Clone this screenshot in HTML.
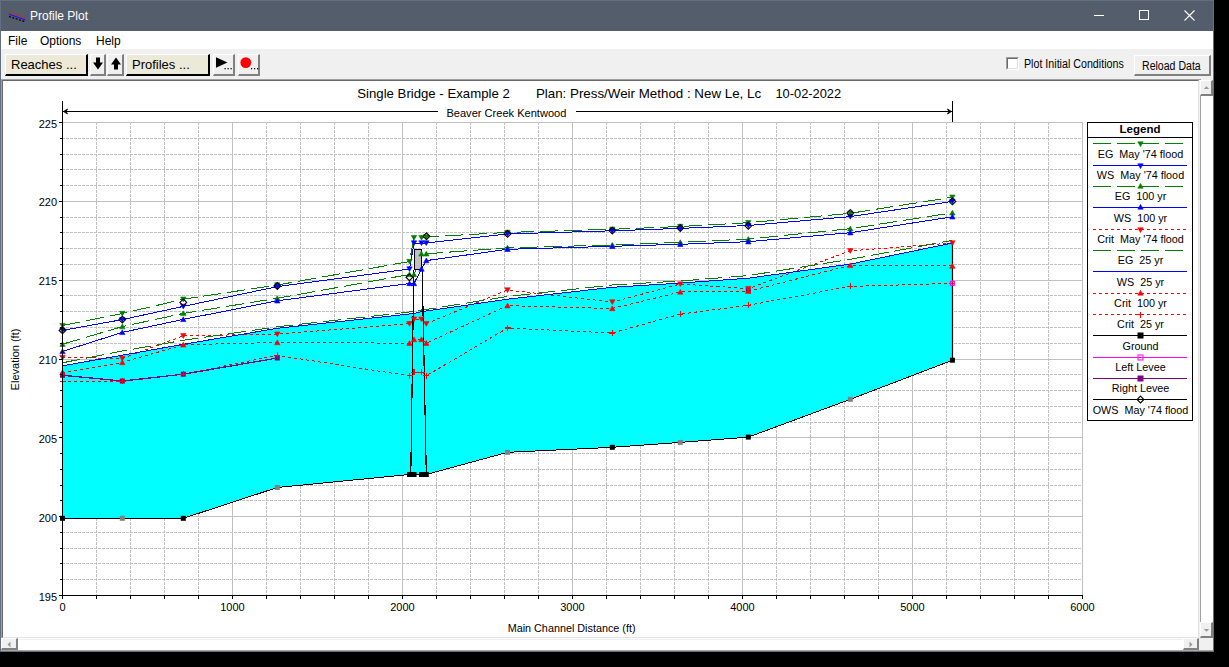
<!DOCTYPE html>
<html><head><meta charset="utf-8"><title>Profile Plot</title>
<style>
html,body{margin:0;padding:0;width:1229px;height:667px;overflow:hidden;background:#000;}
body{font-family:"Liberation Sans",sans-serif;position:relative;}
*{box-sizing:border-box;}
.a{position:absolute;}
.btn{position:absolute;background:#ece9d8;border-top:1px solid #fff;border-left:1px solid #fff;border-right:2px solid #000;border-bottom:2px solid #000;font-size:13px;color:#000;}
.gbtn{position:absolute;background:#f0f0f0;border-top:1px solid #fff;border-left:1px solid #fff;border-right:2px solid #808080;border-bottom:2px solid #808080;}
</style></head><body>
<div class="a" style="left:0;top:0;width:1214px;height:652px;background:#627080;"></div>
<div class="a" style="left:1px;top:1px;width:1212px;height:30px;background:#535d6b;"></div>
<div class="a" style="left:1px;top:31px;width:1212px;height:18px;background:#fff;"></div>
<div class="a" style="left:1px;top:49px;width:1212px;height:602px;background:#f0f0f0;"></div>
<!-- title -->
<svg class="a" style="left:8px;top:11px" width="18" height="12" viewBox="0 0 18 12">
<path d="M1 1.4L17 6.6" stroke="#ff1010" stroke-width="1.2" stroke-dasharray="2 2"/>
<path d="M1 3.3L17 8.7" stroke="#1818f0" stroke-width="1.1"/>
<path d="M1 5.5L17 10.7" stroke="#000" stroke-width="1.2" stroke-dasharray="2 1.5"/>
</svg>
<div class="a" style="left:30px;top:9px;font-size:12px;color:#fff;line-height:14px;">Profile Plot</div>
<div class="a" style="left:1094px;top:15px;width:10px;height:1px;background:#fff;"></div>
<div class="a" style="left:1139px;top:10px;width:10px;height:10px;border:1px solid #fff;"></div>
<svg class="a" style="left:1184px;top:10px" width="12" height="11" viewBox="0 0 12 11"><path d="M0.5 0.5 L10.5 10.5 M10.5 0.5 L0.5 10.5" stroke="#fff" stroke-width="1.1"/></svg>
<!-- menu -->
<div class="a" style="left:8px;top:34px;font-size:12px;line-height:14px;color:#000;">File</div>
<div class="a" style="left:40px;top:34px;font-size:12px;line-height:14px;color:#000;">Options</div>
<div class="a" style="left:96px;top:34px;font-size:12px;line-height:14px;color:#000;">Help</div>
<!-- toolbar -->
<div class="btn" style="left:5px;top:54px;width:83px;height:22px;"><span class="a" style="left:5px;top:2px;line-height:15px;">Reaches ...</span></div>
<div class="gbtn" style="left:90px;top:54px;width:16px;height:22px;"></div>
<svg class="a" style="left:93px;top:57px" width="10" height="14" viewBox="0 0 10 14"><path d="M3 0.5H7V5.5H10L5 12.5L0 5.5H3Z" fill="#000"/></svg>
<div class="gbtn" style="left:107px;top:54px;width:17px;height:22px;"></div>
<svg class="a" style="left:111px;top:57px" width="10" height="14" viewBox="0 0 10 14"><path d="M3 12.5H7V7.5H10L5 0.5L0 7.5H3Z" fill="#000"/></svg>
<div class="btn" style="left:126px;top:54px;width:84px;height:22px;"><span class="a" style="left:5px;top:2px;line-height:15px;">Profiles ...</span></div>
<div class="gbtn" style="left:213px;top:54px;width:22px;height:22px;"></div>
<svg class="a" style="left:215px;top:57px" width="20" height="14" viewBox="0 0 20 14"><path d="M1 0.2L12.5 5.5L1 10.8Z" fill="#000"/><rect x="9.5" y="11" width="1.2" height="1.3" fill="#000"/><rect x="12.5" y="11" width="1.2" height="1.3" fill="#000"/><rect x="15.5" y="11" width="1.2" height="1.3" fill="#000"/></svg>
<div class="gbtn" style="left:238px;top:54px;width:22px;height:22px;"></div>
<svg class="a" style="left:240px;top:57px" width="20" height="14" viewBox="0 0 20 14"><circle cx="5.8" cy="5.6" r="5.4" fill="#ff0000"/><rect x="11" y="11" width="1.2" height="1.3" fill="#000"/><rect x="14" y="11" width="1.2" height="1.3" fill="#000"/><rect x="17" y="11" width="1.2" height="1.3" fill="#000"/></svg>
<div class="a" style="left:1006px;top:57px;width:13px;height:13px;border-top:1px solid #a0a0a0;border-left:1px solid #a0a0a0;border-right:1px solid #fff;border-bottom:1px solid #fff;"></div>
<div class="a" style="left:1007px;top:58px;width:11px;height:11px;border-top:1px solid #696969;border-left:1px solid #696969;border-right:1px solid #e3e3e3;border-bottom:1px solid #e3e3e3;background:#fff;"></div>
<div class="a" style="left:1023.5px;top:57px;font-size:12px;line-height:14px;color:#000;white-space:nowrap;transform:scaleX(0.89);transform-origin:0 0;">Plot Initial Conditions</div>
<div class="gbtn" style="left:1134px;top:55px;width:77px;height:21px;"><span class="a" style="left:7px;top:3px;font-size:12px;line-height:14px;color:#000;white-space:nowrap;transform:scaleX(0.88);transform-origin:0 0;">Reload Data</span></div>
<!-- plot panel -->
<div class="a" style="left:1px;top:79px;width:1200px;height:560px;background:#f0f0f0;border-top:1px solid #a0a0a0;border-left:1px solid #a0a0a0;"></div>
<div class="a" style="left:2px;top:80px;width:1197px;height:558px;background:#fff;border-top:1px solid #696969;border-left:1px solid #696969;border-right:1px solid #e3e3e3;border-bottom:1px solid #e3e3e3;"></div>
<!-- v scrollbar -->
<div class="a" style="left:1200px;top:80px;width:13px;height:558px;background:#fff;border-left:1px solid #a0a0a0;"></div>
<div class="gbtn" style="left:1200px;top:80px;width:13px;height:16px;"></div>
<svg class="a" style="left:1202px;top:85px" width="9" height="6" viewBox="0 0 9 6"><path d="M4.5 1.2L7.2 4H1.8Z" fill="#999"/></svg>
<div class="gbtn" style="left:1200px;top:622px;width:13px;height:16px;"></div>
<svg class="a" style="left:1202px;top:627px" width="9" height="6" viewBox="0 0 9 6"><path d="M4.5 4.8L7.2 2H1.8Z" fill="#999"/></svg>
<!-- h scrollbar -->
<div class="a" style="left:1px;top:638px;width:1198px;height:12px;background:#fff;"></div>
<div class="a" style="left:1px;top:639px;width:1198px;height:1px;background:#f0f0f0;"></div>
<div class="a" style="left:1px;top:650px;width:1212px;height:1px;background:#a8a8a8;"></div>
<div class="gbtn" style="left:1px;top:638px;width:17px;height:12px;"></div>
<svg class="a" style="left:6px;top:640px" width="6" height="9" viewBox="0 0 6 9"><path d="M1.5 4.5L4.5 1.5V7.5Z" fill="#999"/></svg>
<div class="gbtn" style="left:1183px;top:638px;width:16px;height:12px;"></div>
<svg class="a" style="left:1188px;top:640px" width="6" height="9" viewBox="0 0 6 9"><path d="M4.5 4.5L1.5 1.5V7.5Z" fill="#999"/></svg>
<div class="a" style="left:1200px;top:638px;width:13px;height:12px;background:#f0f0f0;"></div>
<svg width="1229" height="667" viewBox="0 0 1229 667" style="position:absolute;left:0;top:0" font-family="Liberation Sans, sans-serif">
<defs><clipPath id="pc"><rect x="3" y="81" width="1195" height="556"/></clipPath></defs>
<g clip-path="url(#pc)">
<line x1="62" y1="579.5" x2="1082" y2="579.5" stroke="#c0c0c0" stroke-width="1" stroke-dasharray="3 1"/>
<line x1="62" y1="563.5" x2="1082" y2="563.5" stroke="#c0c0c0" stroke-width="1" stroke-dasharray="3 1"/>
<line x1="62" y1="548.5" x2="1082" y2="548.5" stroke="#c0c0c0" stroke-width="1" stroke-dasharray="3 1"/>
<line x1="62" y1="532.5" x2="1082" y2="532.5" stroke="#c0c0c0" stroke-width="1" stroke-dasharray="3 1"/>
<line x1="62.5" y1="516.5" x2="1082.5" y2="516.5" stroke="#c0c0c0" stroke-width="1"/>
<line x1="62" y1="500.5" x2="1082" y2="500.5" stroke="#c0c0c0" stroke-width="1" stroke-dasharray="3 1"/>
<line x1="62" y1="485.5" x2="1082" y2="485.5" stroke="#c0c0c0" stroke-width="1" stroke-dasharray="3 1"/>
<line x1="62" y1="469.5" x2="1082" y2="469.5" stroke="#c0c0c0" stroke-width="1" stroke-dasharray="3 1"/>
<line x1="62" y1="453.5" x2="1082" y2="453.5" stroke="#c0c0c0" stroke-width="1" stroke-dasharray="3 1"/>
<line x1="62.5" y1="437.5" x2="1082.5" y2="437.5" stroke="#c0c0c0" stroke-width="1"/>
<line x1="62" y1="422.5" x2="1082" y2="422.5" stroke="#c0c0c0" stroke-width="1" stroke-dasharray="3 1"/>
<line x1="62" y1="406.5" x2="1082" y2="406.5" stroke="#c0c0c0" stroke-width="1" stroke-dasharray="3 1"/>
<line x1="62" y1="390.5" x2="1082" y2="390.5" stroke="#c0c0c0" stroke-width="1" stroke-dasharray="3 1"/>
<line x1="62" y1="374.5" x2="1082" y2="374.5" stroke="#c0c0c0" stroke-width="1" stroke-dasharray="3 1"/>
<line x1="62.5" y1="359.5" x2="1082.5" y2="359.5" stroke="#c0c0c0" stroke-width="1"/>
<line x1="62" y1="343.5" x2="1082" y2="343.5" stroke="#c0c0c0" stroke-width="1" stroke-dasharray="3 1"/>
<line x1="62" y1="327.5" x2="1082" y2="327.5" stroke="#c0c0c0" stroke-width="1" stroke-dasharray="3 1"/>
<line x1="62" y1="311.5" x2="1082" y2="311.5" stroke="#c0c0c0" stroke-width="1" stroke-dasharray="3 1"/>
<line x1="62" y1="295.5" x2="1082" y2="295.5" stroke="#c0c0c0" stroke-width="1" stroke-dasharray="3 1"/>
<line x1="62.5" y1="280.5" x2="1082.5" y2="280.5" stroke="#c0c0c0" stroke-width="1"/>
<line x1="62" y1="264.5" x2="1082" y2="264.5" stroke="#c0c0c0" stroke-width="1" stroke-dasharray="3 1"/>
<line x1="62" y1="248.5" x2="1082" y2="248.5" stroke="#c0c0c0" stroke-width="1" stroke-dasharray="3 1"/>
<line x1="62" y1="232.5" x2="1082" y2="232.5" stroke="#c0c0c0" stroke-width="1" stroke-dasharray="3 1"/>
<line x1="62" y1="217.5" x2="1082" y2="217.5" stroke="#c0c0c0" stroke-width="1" stroke-dasharray="3 1"/>
<line x1="62.5" y1="201.5" x2="1082.5" y2="201.5" stroke="#c0c0c0" stroke-width="1"/>
<line x1="62" y1="185.5" x2="1082" y2="185.5" stroke="#c0c0c0" stroke-width="1" stroke-dasharray="3 1"/>
<line x1="62" y1="169.5" x2="1082" y2="169.5" stroke="#c0c0c0" stroke-width="1" stroke-dasharray="3 1"/>
<line x1="62" y1="154.5" x2="1082" y2="154.5" stroke="#c0c0c0" stroke-width="1" stroke-dasharray="3 1"/>
<line x1="62" y1="138.5" x2="1082" y2="138.5" stroke="#c0c0c0" stroke-width="1" stroke-dasharray="3 1"/>
<line x1="62.5" y1="122.5" x2="1082.5" y2="122.5" stroke="#c0c0c0" stroke-width="1"/>
<line x1="96.5" y1="122" x2="96.5" y2="595" stroke="#c0c0c0" stroke-width="1" stroke-dasharray="3 1"/>
<line x1="130.5" y1="122" x2="130.5" y2="595" stroke="#c0c0c0" stroke-width="1" stroke-dasharray="3 1"/>
<line x1="164.5" y1="122" x2="164.5" y2="595" stroke="#c0c0c0" stroke-width="1" stroke-dasharray="3 1"/>
<line x1="198.5" y1="122" x2="198.5" y2="595" stroke="#c0c0c0" stroke-width="1" stroke-dasharray="3 1"/>
<line x1="232.5" y1="122.5" x2="232.5" y2="595.5" stroke="#c0c0c0" stroke-width="1"/>
<line x1="266.5" y1="122" x2="266.5" y2="595" stroke="#c0c0c0" stroke-width="1" stroke-dasharray="3 1"/>
<line x1="300.5" y1="122" x2="300.5" y2="595" stroke="#c0c0c0" stroke-width="1" stroke-dasharray="3 1"/>
<line x1="334.5" y1="122" x2="334.5" y2="595" stroke="#c0c0c0" stroke-width="1" stroke-dasharray="3 1"/>
<line x1="368.5" y1="122" x2="368.5" y2="595" stroke="#c0c0c0" stroke-width="1" stroke-dasharray="3 1"/>
<line x1="402.5" y1="122.5" x2="402.5" y2="595.5" stroke="#c0c0c0" stroke-width="1"/>
<line x1="436.5" y1="122" x2="436.5" y2="595" stroke="#c0c0c0" stroke-width="1" stroke-dasharray="3 1"/>
<line x1="470.5" y1="122" x2="470.5" y2="595" stroke="#c0c0c0" stroke-width="1" stroke-dasharray="3 1"/>
<line x1="504.5" y1="122" x2="504.5" y2="595" stroke="#c0c0c0" stroke-width="1" stroke-dasharray="3 1"/>
<line x1="538.5" y1="122" x2="538.5" y2="595" stroke="#c0c0c0" stroke-width="1" stroke-dasharray="3 1"/>
<line x1="572.5" y1="122.5" x2="572.5" y2="595.5" stroke="#c0c0c0" stroke-width="1"/>
<line x1="606.5" y1="122" x2="606.5" y2="595" stroke="#c0c0c0" stroke-width="1" stroke-dasharray="3 1"/>
<line x1="640.5" y1="122" x2="640.5" y2="595" stroke="#c0c0c0" stroke-width="1" stroke-dasharray="3 1"/>
<line x1="674.5" y1="122" x2="674.5" y2="595" stroke="#c0c0c0" stroke-width="1" stroke-dasharray="3 1"/>
<line x1="708.5" y1="122" x2="708.5" y2="595" stroke="#c0c0c0" stroke-width="1" stroke-dasharray="3 1"/>
<line x1="742.5" y1="122.5" x2="742.5" y2="595.5" stroke="#c0c0c0" stroke-width="1"/>
<line x1="776.5" y1="122" x2="776.5" y2="595" stroke="#c0c0c0" stroke-width="1" stroke-dasharray="3 1"/>
<line x1="810.5" y1="122" x2="810.5" y2="595" stroke="#c0c0c0" stroke-width="1" stroke-dasharray="3 1"/>
<line x1="844.5" y1="122" x2="844.5" y2="595" stroke="#c0c0c0" stroke-width="1" stroke-dasharray="3 1"/>
<line x1="878.5" y1="122" x2="878.5" y2="595" stroke="#c0c0c0" stroke-width="1" stroke-dasharray="3 1"/>
<line x1="912.5" y1="122.5" x2="912.5" y2="595.5" stroke="#c0c0c0" stroke-width="1"/>
<line x1="946.5" y1="122" x2="946.5" y2="595" stroke="#c0c0c0" stroke-width="1" stroke-dasharray="3 1"/>
<line x1="980.5" y1="122" x2="980.5" y2="595" stroke="#c0c0c0" stroke-width="1" stroke-dasharray="3 1"/>
<line x1="1014.5" y1="122" x2="1014.5" y2="595" stroke="#c0c0c0" stroke-width="1" stroke-dasharray="3 1"/>
<line x1="1048.5" y1="122" x2="1048.5" y2="595" stroke="#c0c0c0" stroke-width="1" stroke-dasharray="3 1"/>
<line x1="1082.5" y1="122.5" x2="1082.5" y2="595.5" stroke="#c0c0c0" stroke-width="1"/>
<polygon points="62.5,365.8 122.3,355.2 183.3,344.3 277.3,328.3 409.5,314.0 414.0,313.5 421.5,311.5 426.3,311.0 507.5,299.2 612.3,287.3 680.3,283.1 748.3,278.2 850.3,264.1 952.4,243.0 952.4,360.2 850.3,399.3 748.3,437.1 680.3,442.4 612.3,447.3 507.5,452.3 426.3,474.5 421.5,474.5 414.0,474.5 409.5,474.5 277.3,487.5 183.3,518.3 122.3,518.3 62.5,518.3" fill="#00ffff" stroke="none"/>
<polyline points="62.5,518.3 122.3,518.3 183.3,518.3 277.3,487.5 409.5,474.5 414.0,474.5 421.5,474.5 426.3,474.5 507.5,452.3 612.3,447.3 680.3,442.4 748.3,437.1 850.3,399.3 952.4,360.2" fill="none" stroke="#000" stroke-width="1.0" shape-rendering="crispEdges"/>
<polyline points="62.5,381.6 122.3,381.4 183.3,374.2 277.3,355.4 409.5,375.8 414.0,372.2 421.5,372.2 426.3,375.8 507.5,328.0 612.3,333.0 680.3,314.1 748.3,305.3 850.3,286.4 952.4,283.4" fill="none" stroke="#ff0000" stroke-width="1.0" stroke-dasharray="3 3" shape-rendering="crispEdges"/>
<polyline points="62.5,372.4 122.3,362.5 183.3,344.8 277.3,342.5 409.5,343.2 414.0,339.5 421.5,339.5 426.3,343.2 507.5,305.7 612.3,308.5 680.3,292.0 748.3,291.2 850.3,265.4 952.4,266.0" fill="none" stroke="#ff0000" stroke-width="1.0" stroke-dasharray="3 3" shape-rendering="crispEdges"/>
<polyline points="62.5,357.4 122.3,358.5 183.3,335.8 277.3,334.1 409.5,323.7 414.0,319.2 421.5,319.2 426.3,323.7 507.5,290.0 612.3,302.0 680.3,284.0 748.3,288.6 850.3,250.8 952.4,243.0" fill="none" stroke="#ff0000" stroke-width="1.0" stroke-dasharray="3 3" shape-rendering="crispEdges"/>
<polyline points="62.5,362.8 122.3,351.0 183.3,340.3 277.3,326.8 409.5,312.0 414.0,311.5 421.5,310.0 426.3,309.5 507.5,296.5 612.3,285.0 680.3,281.0 748.3,275.6 850.3,259.3 952.4,240.3" fill="none" stroke="#008000" stroke-width="1.0" stroke-dasharray="18 6" shape-rendering="crispEdges"/>
<polyline points="62.5,365.8 122.3,355.2 183.3,344.3 277.3,328.3 409.5,314.0 414.0,313.5 421.5,311.5 426.3,311.0 507.5,299.2 612.3,287.3 680.3,283.1 748.3,278.2 850.3,264.1 952.4,243.0" fill="none" stroke="#0000ff" stroke-width="1.0" shape-rendering="crispEdges"/>
<polyline points="62.5,344.2 122.3,326.6 183.3,313.4 277.3,298.3 409.5,274.5 414.0,274.5 421.5,253.8 426.3,253.8 507.5,247.8 612.3,245.0 680.3,242.3 748.3,239.1 850.3,228.7 952.4,212.8" fill="none" stroke="#008000" stroke-width="1.0" stroke-dasharray="18 6" shape-rendering="crispEdges"/>
<polyline points="62.5,351.4 122.3,332.4 183.3,319.4 277.3,300.8 409.5,283.5 414.0,283.5 421.5,269.0 426.3,260.6 507.5,249.3 612.3,246.3 680.3,244.3 748.3,241.7 850.3,232.7 952.4,216.8" fill="none" stroke="#0000ff" stroke-width="1.0" shape-rendering="crispEdges"/>
<polyline points="62.5,325.6 122.3,313.5 183.3,299.2 277.3,285.0 409.5,261.5 414.0,237.6 421.5,237.6 426.3,237.0 507.5,232.4 612.3,229.3 680.3,226.5 748.3,222.7 850.3,213.3 952.4,197.2" fill="none" stroke="#008000" stroke-width="1.0" stroke-dasharray="18 6" shape-rendering="crispEdges"/>
<polyline points="62.5,330.4 122.3,319.6 183.3,306.4 277.3,286.6 409.5,269.0 414.0,243.0 421.5,243.0 426.3,243.0 507.5,233.9 612.3,230.8 680.3,228.4 748.3,225.5 850.3,216.6 952.4,201.4" fill="none" stroke="#0000ff" stroke-width="1.0" shape-rendering="crispEdges"/>
<polyline points="62.5,375.3 122.3,381.0 183.3,374.2 277.3,358.0" fill="none" stroke="#800080" stroke-width="1.3" shape-rendering="crispEdges"/>
<line x1="952.5" y1="243" x2="952.5" y2="360" stroke="#000" stroke-width="1.2"/>
<line x1="413.8" y1="270" x2="410.8" y2="474" stroke="#000" stroke-width="1.2" shape-rendering="crispEdges"/>
<line x1="422.2" y1="270" x2="426.3" y2="474" stroke="#000" stroke-width="1.2" shape-rendering="crispEdges"/>
<rect x="414.5" y="249.5" width="7" height="20" fill="#c0c0c0" stroke="#000" stroke-width="1"/>
<rect x="60.0" y="515.8" width="5.0" height="5.0" fill="#000"/>
<rect x="119.8" y="515.8" width="5.0" height="5.0" fill="#808080"/>
<rect x="180.8" y="515.8" width="5.0" height="5.0" fill="#000"/>
<rect x="274.8" y="485.0" width="5.0" height="5.0" fill="#808080"/>
<rect x="407.0" y="472.0" width="5.0" height="5.0" fill="#000"/>
<rect x="411.5" y="472.0" width="5.0" height="5.0" fill="#000"/>
<rect x="419.0" y="472.0" width="5.0" height="5.0" fill="#000"/>
<rect x="423.8" y="472.0" width="5.0" height="5.0" fill="#000"/>
<rect x="505.0" y="449.8" width="5.0" height="5.0" fill="#808080"/>
<rect x="609.8" y="444.8" width="5.0" height="5.0" fill="#000"/>
<rect x="677.8" y="439.9" width="5.0" height="5.0" fill="#808080"/>
<rect x="745.8" y="434.6" width="5.0" height="5.0" fill="#000"/>
<rect x="847.8" y="396.8" width="5.0" height="5.0" fill="#808080"/>
<rect x="949.9" y="357.7" width="5.0" height="5.0" fill="#000"/>
<rect x="60.0" y="372.8" width="5.0" height="5.0" fill="#800080"/>
<rect x="119.8" y="378.5" width="5.0" height="5.0" fill="#800080"/>
<rect x="180.8" y="371.7" width="5.0" height="5.0" fill="#800080"/>
<rect x="274.8" y="355.5" width="5.0" height="5.0" fill="#800080"/>
<rect x="745.8" y="287.8" width="5.0" height="5.0" fill="#800080"/>
<path d="M59.5 381.6H65.5M62.5 378.6V384.6" stroke="#ff0000" stroke-width="1.2" shape-rendering="crispEdges"/>
<polygon points="59.8,374.6 65.2,374.6 62.5,369.8" fill="#ff0000" stroke="#ff0000" stroke-width="0.6"/>
<polygon points="59.8,355.2 65.2,355.2 62.5,360.0" fill="#ff0000" stroke="#ff0000" stroke-width="0.6"/>
<polygon points="59.8,346.4 65.2,346.4 62.5,341.6" fill="#008000" stroke="#008000" stroke-width="0.6"/>
<polygon points="59.8,353.6 65.2,353.6 62.5,348.8" fill="#0000ff" stroke="#0000ff" stroke-width="0.6"/>
<polygon points="59.8,323.4 65.2,323.4 62.5,328.2" fill="#008000" stroke="#008000" stroke-width="0.6"/>
<polygon points="59.8,328.2 65.2,328.2 62.5,333.0" fill="#0000ff" stroke="#0000ff" stroke-width="0.6"/>
<path d="M119.3 381.4H125.3M122.3 378.4V384.4" stroke="#ff0000" stroke-width="1.2" shape-rendering="crispEdges"/>
<polygon points="119.6,364.7 125.0,364.7 122.3,359.9" fill="#ff0000" stroke="#ff0000" stroke-width="0.6"/>
<polygon points="119.6,356.3 125.0,356.3 122.3,361.1" fill="#ff0000" stroke="#ff0000" stroke-width="0.6"/>
<polygon points="119.6,328.8 125.0,328.8 122.3,324.0" fill="#008000" stroke="#008000" stroke-width="0.6"/>
<polygon points="119.6,334.6 125.0,334.6 122.3,329.8" fill="#0000ff" stroke="#0000ff" stroke-width="0.6"/>
<polygon points="119.6,311.3 125.0,311.3 122.3,316.1" fill="#008000" stroke="#008000" stroke-width="0.6"/>
<polygon points="119.6,317.4 125.0,317.4 122.3,322.2" fill="#0000ff" stroke="#0000ff" stroke-width="0.6"/>
<path d="M180.3 374.2H186.3M183.3 371.2V377.2" stroke="#ff0000" stroke-width="1.2" shape-rendering="crispEdges"/>
<polygon points="180.6,347.0 186.0,347.0 183.3,342.2" fill="#ff0000" stroke="#ff0000" stroke-width="0.6"/>
<polygon points="180.6,333.6 186.0,333.6 183.3,338.4" fill="#ff0000" stroke="#ff0000" stroke-width="0.6"/>
<polygon points="180.6,315.6 186.0,315.6 183.3,310.8" fill="#008000" stroke="#008000" stroke-width="0.6"/>
<polygon points="180.6,321.6 186.0,321.6 183.3,316.8" fill="#0000ff" stroke="#0000ff" stroke-width="0.6"/>
<polygon points="180.6,297.0 186.0,297.0 183.3,301.8" fill="#008000" stroke="#008000" stroke-width="0.6"/>
<polygon points="180.6,304.2 186.0,304.2 183.3,309.0" fill="#0000ff" stroke="#0000ff" stroke-width="0.6"/>
<path d="M274.3 355.4H280.3M277.3 352.4V358.4" stroke="#ff0000" stroke-width="1.2" shape-rendering="crispEdges"/>
<polygon points="274.6,344.7 280.0,344.7 277.3,339.9" fill="#ff0000" stroke="#ff0000" stroke-width="0.6"/>
<polygon points="274.6,331.9 280.0,331.9 277.3,336.7" fill="#ff0000" stroke="#ff0000" stroke-width="0.6"/>
<polygon points="274.6,300.5 280.0,300.5 277.3,295.7" fill="#008000" stroke="#008000" stroke-width="0.6"/>
<polygon points="274.6,303.0 280.0,303.0 277.3,298.2" fill="#0000ff" stroke="#0000ff" stroke-width="0.6"/>
<polygon points="274.6,282.8 280.0,282.8 277.3,287.6" fill="#008000" stroke="#008000" stroke-width="0.6"/>
<polygon points="274.6,284.4 280.0,284.4 277.3,289.2" fill="#0000ff" stroke="#0000ff" stroke-width="0.6"/>
<path d="M406.5 375.8H412.5M409.5 372.8V378.8" stroke="#ff0000" stroke-width="1.2" shape-rendering="crispEdges"/>
<polygon points="406.8,345.4 412.2,345.4 409.5,340.6" fill="#ff0000" stroke="#ff0000" stroke-width="0.6"/>
<polygon points="406.8,321.5 412.2,321.5 409.5,326.3" fill="#ff0000" stroke="#ff0000" stroke-width="0.6"/>
<polygon points="406.8,276.7 412.2,276.7 409.5,271.9" fill="#008000" stroke="#008000" stroke-width="0.6"/>
<polygon points="406.8,285.7 412.2,285.7 409.5,280.9" fill="#0000ff" stroke="#0000ff" stroke-width="0.6"/>
<polygon points="406.8,259.3 412.2,259.3 409.5,264.1" fill="#008000" stroke="#008000" stroke-width="0.6"/>
<polygon points="406.8,266.8 412.2,266.8 409.5,271.6" fill="#0000ff" stroke="#0000ff" stroke-width="0.6"/>
<path d="M411.0 372.2H417.0M414.0 369.2V375.2" stroke="#ff0000" stroke-width="1.2" shape-rendering="crispEdges"/>
<polygon points="411.3,341.7 416.7,341.7 414.0,336.9" fill="#ff0000" stroke="#ff0000" stroke-width="0.6"/>
<polygon points="411.3,317.0 416.7,317.0 414.0,321.8" fill="#ff0000" stroke="#ff0000" stroke-width="0.6"/>
<polygon points="411.3,276.7 416.7,276.7 414.0,271.9" fill="#008000" stroke="#008000" stroke-width="0.6"/>
<polygon points="411.3,285.7 416.7,285.7 414.0,280.9" fill="#0000ff" stroke="#0000ff" stroke-width="0.6"/>
<polygon points="411.3,235.4 416.7,235.4 414.0,240.2" fill="#008000" stroke="#008000" stroke-width="0.6"/>
<polygon points="411.3,240.8 416.7,240.8 414.0,245.6" fill="#0000ff" stroke="#0000ff" stroke-width="0.6"/>
<path d="M418.5 372.2H424.5M421.5 369.2V375.2" stroke="#ff0000" stroke-width="1.2" shape-rendering="crispEdges"/>
<polygon points="418.8,341.7 424.2,341.7 421.5,336.9" fill="#ff0000" stroke="#ff0000" stroke-width="0.6"/>
<polygon points="418.8,317.0 424.2,317.0 421.5,321.8" fill="#ff0000" stroke="#ff0000" stroke-width="0.6"/>
<polygon points="418.8,256.0 424.2,256.0 421.5,251.2" fill="#008000" stroke="#008000" stroke-width="0.6"/>
<polygon points="418.8,271.2 424.2,271.2 421.5,266.4" fill="#0000ff" stroke="#0000ff" stroke-width="0.6"/>
<polygon points="418.8,235.4 424.2,235.4 421.5,240.2" fill="#008000" stroke="#008000" stroke-width="0.6"/>
<polygon points="418.8,240.8 424.2,240.8 421.5,245.6" fill="#0000ff" stroke="#0000ff" stroke-width="0.6"/>
<path d="M423.3 375.8H429.3M426.3 372.8V378.8" stroke="#ff0000" stroke-width="1.2" shape-rendering="crispEdges"/>
<polygon points="423.6,345.4 429.0,345.4 426.3,340.6" fill="#ff0000" stroke="#ff0000" stroke-width="0.6"/>
<polygon points="423.6,321.5 429.0,321.5 426.3,326.3" fill="#ff0000" stroke="#ff0000" stroke-width="0.6"/>
<polygon points="423.6,256.0 429.0,256.0 426.3,251.2" fill="#008000" stroke="#008000" stroke-width="0.6"/>
<polygon points="423.6,262.8 429.0,262.8 426.3,258.0" fill="#0000ff" stroke="#0000ff" stroke-width="0.6"/>
<polygon points="423.6,234.8 429.0,234.8 426.3,239.6" fill="#008000" stroke="#008000" stroke-width="0.6"/>
<polygon points="423.6,240.8 429.0,240.8 426.3,245.6" fill="#0000ff" stroke="#0000ff" stroke-width="0.6"/>
<path d="M504.5 328.0H510.5M507.5 325.0V331.0" stroke="#ff0000" stroke-width="1.2" shape-rendering="crispEdges"/>
<polygon points="504.8,307.9 510.2,307.9 507.5,303.1" fill="#ff0000" stroke="#ff0000" stroke-width="0.6"/>
<polygon points="504.8,287.8 510.2,287.8 507.5,292.6" fill="#ff0000" stroke="#ff0000" stroke-width="0.6"/>
<polygon points="504.8,250.0 510.2,250.0 507.5,245.2" fill="#008000" stroke="#008000" stroke-width="0.6"/>
<polygon points="504.8,251.5 510.2,251.5 507.5,246.7" fill="#0000ff" stroke="#0000ff" stroke-width="0.6"/>
<polygon points="504.8,230.2 510.2,230.2 507.5,235.0" fill="#008000" stroke="#008000" stroke-width="0.6"/>
<polygon points="504.8,231.7 510.2,231.7 507.5,236.5" fill="#0000ff" stroke="#0000ff" stroke-width="0.6"/>
<path d="M609.3 333.0H615.3M612.3 330.0V336.0" stroke="#ff0000" stroke-width="1.2" shape-rendering="crispEdges"/>
<polygon points="609.6,310.7 615.0,310.7 612.3,305.9" fill="#ff0000" stroke="#ff0000" stroke-width="0.6"/>
<polygon points="609.6,299.8 615.0,299.8 612.3,304.6" fill="#ff0000" stroke="#ff0000" stroke-width="0.6"/>
<polygon points="609.6,247.2 615.0,247.2 612.3,242.4" fill="#008000" stroke="#008000" stroke-width="0.6"/>
<polygon points="609.6,248.5 615.0,248.5 612.3,243.7" fill="#0000ff" stroke="#0000ff" stroke-width="0.6"/>
<polygon points="609.6,227.1 615.0,227.1 612.3,231.9" fill="#008000" stroke="#008000" stroke-width="0.6"/>
<polygon points="609.6,228.6 615.0,228.6 612.3,233.4" fill="#0000ff" stroke="#0000ff" stroke-width="0.6"/>
<path d="M677.3 314.1H683.3M680.3 311.1V317.1" stroke="#ff0000" stroke-width="1.2" shape-rendering="crispEdges"/>
<polygon points="677.6,294.2 683.0,294.2 680.3,289.4" fill="#ff0000" stroke="#ff0000" stroke-width="0.6"/>
<polygon points="677.6,281.8 683.0,281.8 680.3,286.6" fill="#ff0000" stroke="#ff0000" stroke-width="0.6"/>
<polygon points="677.6,244.5 683.0,244.5 680.3,239.7" fill="#008000" stroke="#008000" stroke-width="0.6"/>
<polygon points="677.6,246.5 683.0,246.5 680.3,241.7" fill="#0000ff" stroke="#0000ff" stroke-width="0.6"/>
<polygon points="677.6,224.3 683.0,224.3 680.3,229.1" fill="#008000" stroke="#008000" stroke-width="0.6"/>
<polygon points="677.6,226.2 683.0,226.2 680.3,231.0" fill="#0000ff" stroke="#0000ff" stroke-width="0.6"/>
<path d="M745.3 305.3H751.3M748.3 302.3V308.3" stroke="#ff0000" stroke-width="1.2" shape-rendering="crispEdges"/>
<polygon points="745.6,293.4 751.0,293.4 748.3,288.6" fill="#ff0000" stroke="#ff0000" stroke-width="0.6"/>
<polygon points="745.6,286.4 751.0,286.4 748.3,291.2" fill="#ff0000" stroke="#ff0000" stroke-width="0.6"/>
<polygon points="745.6,241.3 751.0,241.3 748.3,236.5" fill="#008000" stroke="#008000" stroke-width="0.6"/>
<polygon points="745.6,243.9 751.0,243.9 748.3,239.1" fill="#0000ff" stroke="#0000ff" stroke-width="0.6"/>
<polygon points="745.6,220.5 751.0,220.5 748.3,225.3" fill="#008000" stroke="#008000" stroke-width="0.6"/>
<polygon points="745.6,223.3 751.0,223.3 748.3,228.1" fill="#0000ff" stroke="#0000ff" stroke-width="0.6"/>
<path d="M847.3 286.4H853.3M850.3 283.4V289.4" stroke="#ff0000" stroke-width="1.2" shape-rendering="crispEdges"/>
<polygon points="847.6,267.6 853.0,267.6 850.3,262.8" fill="#ff0000" stroke="#ff0000" stroke-width="0.6"/>
<polygon points="847.6,248.6 853.0,248.6 850.3,253.4" fill="#ff0000" stroke="#ff0000" stroke-width="0.6"/>
<polygon points="847.6,230.9 853.0,230.9 850.3,226.1" fill="#008000" stroke="#008000" stroke-width="0.6"/>
<polygon points="847.6,234.9 853.0,234.9 850.3,230.1" fill="#0000ff" stroke="#0000ff" stroke-width="0.6"/>
<polygon points="847.6,211.1 853.0,211.1 850.3,215.9" fill="#008000" stroke="#008000" stroke-width="0.6"/>
<polygon points="847.6,214.4 853.0,214.4 850.3,219.2" fill="#0000ff" stroke="#0000ff" stroke-width="0.6"/>
<path d="M949.4 283.4H955.4M952.4 280.4V286.4" stroke="#ff0000" stroke-width="1.2" shape-rendering="crispEdges"/>
<polygon points="949.7,268.2 955.1,268.2 952.4,263.4" fill="#ff0000" stroke="#ff0000" stroke-width="0.6"/>
<polygon points="949.7,240.8 955.1,240.8 952.4,245.6" fill="#ff0000" stroke="#ff0000" stroke-width="0.6"/>
<polygon points="949.7,215.0 955.1,215.0 952.4,210.2" fill="#008000" stroke="#008000" stroke-width="0.6"/>
<polygon points="949.7,219.0 955.1,219.0 952.4,214.2" fill="#0000ff" stroke="#0000ff" stroke-width="0.6"/>
<polygon points="949.7,195.0 955.1,195.0 952.4,199.8" fill="#008000" stroke="#008000" stroke-width="0.6"/>
<polygon points="949.7,199.2 955.1,199.2 952.4,204.0" fill="#0000ff" stroke="#0000ff" stroke-width="0.6"/>
<polygon points="62.5,327.0 65.9,330.4 62.5,333.8 59.1,330.4" fill="none" stroke="#000" stroke-width="1.1"/>
<polygon points="122.3,316.2 125.7,319.6 122.3,323.0 118.9,319.6" fill="none" stroke="#000" stroke-width="1.1"/>
<polygon points="183.3,299.0 186.7,302.4 183.3,305.8 179.9,302.4" fill="none" stroke="#000" stroke-width="1.1"/>
<polygon points="277.3,282.6 280.7,286.0 277.3,289.4 273.9,286.0" fill="none" stroke="#000" stroke-width="1.1"/>
<polygon points="409.4,273.8 412.8,277.2 409.4,280.6 406.0,277.2" fill="none" stroke="#000" stroke-width="1.1"/>
<polygon points="426.5,232.9 429.9,236.3 426.5,239.7 423.1,236.3" fill="none" stroke="#000" stroke-width="1.1"/>
<polygon points="507.5,230.5 510.9,233.9 507.5,237.3 504.1,233.9" fill="none" stroke="#000" stroke-width="1.1"/>
<polygon points="612.3,227.2 615.7,230.6 612.3,234.0 608.9,230.6" fill="none" stroke="#000" stroke-width="1.1"/>
<polygon points="680.3,224.6 683.7,228.0 680.3,231.4 676.9,228.0" fill="none" stroke="#000" stroke-width="1.1"/>
<polygon points="748.3,222.4 751.7,225.8 748.3,229.2 744.9,225.8" fill="none" stroke="#000" stroke-width="1.1"/>
<polygon points="850.3,209.6 853.7,213.0 850.3,216.4 846.9,213.0" fill="none" stroke="#000" stroke-width="1.1"/>
<polygon points="952.4,198.0 955.8,201.4 952.4,204.8 949.0,201.4" fill="none" stroke="#000" stroke-width="1.1"/>
<rect x="950.4" y="281.4" width="4.0" height="4.0" fill="none" stroke="#ff00ff" stroke-width="1"/>
<line x1="62.5" y1="101" x2="62.5" y2="599" stroke="#000" stroke-width="1" shape-rendering="crispEdges"/>
<line x1="59" y1="595.5" x2="1082.5" y2="595.5" stroke="#000" stroke-width="1" shape-rendering="crispEdges"/>
<line x1="59" y1="595.5" x2="62.5" y2="595.5" stroke="#000" stroke-width="1" shape-rendering="crispEdges"/>
<line x1="60" y1="579.5" x2="62.5" y2="579.5" stroke="#000" stroke-width="1" shape-rendering="crispEdges"/>
<line x1="60" y1="563.5" x2="62.5" y2="563.5" stroke="#000" stroke-width="1" shape-rendering="crispEdges"/>
<line x1="60" y1="548.5" x2="62.5" y2="548.5" stroke="#000" stroke-width="1" shape-rendering="crispEdges"/>
<line x1="60" y1="532.5" x2="62.5" y2="532.5" stroke="#000" stroke-width="1" shape-rendering="crispEdges"/>
<line x1="59" y1="516.5" x2="62.5" y2="516.5" stroke="#000" stroke-width="1" shape-rendering="crispEdges"/>
<line x1="60" y1="500.5" x2="62.5" y2="500.5" stroke="#000" stroke-width="1" shape-rendering="crispEdges"/>
<line x1="60" y1="485.5" x2="62.5" y2="485.5" stroke="#000" stroke-width="1" shape-rendering="crispEdges"/>
<line x1="60" y1="469.5" x2="62.5" y2="469.5" stroke="#000" stroke-width="1" shape-rendering="crispEdges"/>
<line x1="60" y1="453.5" x2="62.5" y2="453.5" stroke="#000" stroke-width="1" shape-rendering="crispEdges"/>
<line x1="59" y1="437.5" x2="62.5" y2="437.5" stroke="#000" stroke-width="1" shape-rendering="crispEdges"/>
<line x1="60" y1="422.5" x2="62.5" y2="422.5" stroke="#000" stroke-width="1" shape-rendering="crispEdges"/>
<line x1="60" y1="406.5" x2="62.5" y2="406.5" stroke="#000" stroke-width="1" shape-rendering="crispEdges"/>
<line x1="60" y1="390.5" x2="62.5" y2="390.5" stroke="#000" stroke-width="1" shape-rendering="crispEdges"/>
<line x1="60" y1="374.5" x2="62.5" y2="374.5" stroke="#000" stroke-width="1" shape-rendering="crispEdges"/>
<line x1="59" y1="359.5" x2="62.5" y2="359.5" stroke="#000" stroke-width="1" shape-rendering="crispEdges"/>
<line x1="60" y1="343.5" x2="62.5" y2="343.5" stroke="#000" stroke-width="1" shape-rendering="crispEdges"/>
<line x1="60" y1="327.5" x2="62.5" y2="327.5" stroke="#000" stroke-width="1" shape-rendering="crispEdges"/>
<line x1="60" y1="311.5" x2="62.5" y2="311.5" stroke="#000" stroke-width="1" shape-rendering="crispEdges"/>
<line x1="60" y1="295.5" x2="62.5" y2="295.5" stroke="#000" stroke-width="1" shape-rendering="crispEdges"/>
<line x1="59" y1="280.5" x2="62.5" y2="280.5" stroke="#000" stroke-width="1" shape-rendering="crispEdges"/>
<line x1="60" y1="264.5" x2="62.5" y2="264.5" stroke="#000" stroke-width="1" shape-rendering="crispEdges"/>
<line x1="60" y1="248.5" x2="62.5" y2="248.5" stroke="#000" stroke-width="1" shape-rendering="crispEdges"/>
<line x1="60" y1="232.5" x2="62.5" y2="232.5" stroke="#000" stroke-width="1" shape-rendering="crispEdges"/>
<line x1="60" y1="217.5" x2="62.5" y2="217.5" stroke="#000" stroke-width="1" shape-rendering="crispEdges"/>
<line x1="59" y1="201.5" x2="62.5" y2="201.5" stroke="#000" stroke-width="1" shape-rendering="crispEdges"/>
<line x1="60" y1="185.5" x2="62.5" y2="185.5" stroke="#000" stroke-width="1" shape-rendering="crispEdges"/>
<line x1="60" y1="169.5" x2="62.5" y2="169.5" stroke="#000" stroke-width="1" shape-rendering="crispEdges"/>
<line x1="60" y1="154.5" x2="62.5" y2="154.5" stroke="#000" stroke-width="1" shape-rendering="crispEdges"/>
<line x1="60" y1="138.5" x2="62.5" y2="138.5" stroke="#000" stroke-width="1" shape-rendering="crispEdges"/>
<line x1="59" y1="122.5" x2="62.5" y2="122.5" stroke="#000" stroke-width="1" shape-rendering="crispEdges"/>
<line x1="62.5" y1="595.5" x2="62.5" y2="599" stroke="#000" stroke-width="1" shape-rendering="crispEdges"/>
<line x1="96.5" y1="595.5" x2="96.5" y2="599" stroke="#000" stroke-width="1" shape-rendering="crispEdges"/>
<line x1="130.5" y1="595.5" x2="130.5" y2="599" stroke="#000" stroke-width="1" shape-rendering="crispEdges"/>
<line x1="164.5" y1="595.5" x2="164.5" y2="599" stroke="#000" stroke-width="1" shape-rendering="crispEdges"/>
<line x1="198.5" y1="595.5" x2="198.5" y2="599" stroke="#000" stroke-width="1" shape-rendering="crispEdges"/>
<line x1="232.5" y1="595.5" x2="232.5" y2="599" stroke="#000" stroke-width="1" shape-rendering="crispEdges"/>
<line x1="266.5" y1="595.5" x2="266.5" y2="599" stroke="#000" stroke-width="1" shape-rendering="crispEdges"/>
<line x1="300.5" y1="595.5" x2="300.5" y2="599" stroke="#000" stroke-width="1" shape-rendering="crispEdges"/>
<line x1="334.5" y1="595.5" x2="334.5" y2="599" stroke="#000" stroke-width="1" shape-rendering="crispEdges"/>
<line x1="368.5" y1="595.5" x2="368.5" y2="599" stroke="#000" stroke-width="1" shape-rendering="crispEdges"/>
<line x1="402.5" y1="595.5" x2="402.5" y2="599" stroke="#000" stroke-width="1" shape-rendering="crispEdges"/>
<line x1="436.5" y1="595.5" x2="436.5" y2="599" stroke="#000" stroke-width="1" shape-rendering="crispEdges"/>
<line x1="470.5" y1="595.5" x2="470.5" y2="599" stroke="#000" stroke-width="1" shape-rendering="crispEdges"/>
<line x1="504.5" y1="595.5" x2="504.5" y2="599" stroke="#000" stroke-width="1" shape-rendering="crispEdges"/>
<line x1="538.5" y1="595.5" x2="538.5" y2="599" stroke="#000" stroke-width="1" shape-rendering="crispEdges"/>
<line x1="572.5" y1="595.5" x2="572.5" y2="599" stroke="#000" stroke-width="1" shape-rendering="crispEdges"/>
<line x1="606.5" y1="595.5" x2="606.5" y2="599" stroke="#000" stroke-width="1" shape-rendering="crispEdges"/>
<line x1="640.5" y1="595.5" x2="640.5" y2="599" stroke="#000" stroke-width="1" shape-rendering="crispEdges"/>
<line x1="674.5" y1="595.5" x2="674.5" y2="599" stroke="#000" stroke-width="1" shape-rendering="crispEdges"/>
<line x1="708.5" y1="595.5" x2="708.5" y2="599" stroke="#000" stroke-width="1" shape-rendering="crispEdges"/>
<line x1="742.5" y1="595.5" x2="742.5" y2="599" stroke="#000" stroke-width="1" shape-rendering="crispEdges"/>
<line x1="776.5" y1="595.5" x2="776.5" y2="599" stroke="#000" stroke-width="1" shape-rendering="crispEdges"/>
<line x1="810.5" y1="595.5" x2="810.5" y2="599" stroke="#000" stroke-width="1" shape-rendering="crispEdges"/>
<line x1="844.5" y1="595.5" x2="844.5" y2="599" stroke="#000" stroke-width="1" shape-rendering="crispEdges"/>
<line x1="878.5" y1="595.5" x2="878.5" y2="599" stroke="#000" stroke-width="1" shape-rendering="crispEdges"/>
<line x1="912.5" y1="595.5" x2="912.5" y2="599" stroke="#000" stroke-width="1" shape-rendering="crispEdges"/>
<line x1="946.5" y1="595.5" x2="946.5" y2="599" stroke="#000" stroke-width="1" shape-rendering="crispEdges"/>
<line x1="980.5" y1="595.5" x2="980.5" y2="599" stroke="#000" stroke-width="1" shape-rendering="crispEdges"/>
<line x1="1014.5" y1="595.5" x2="1014.5" y2="599" stroke="#000" stroke-width="1" shape-rendering="crispEdges"/>
<line x1="1048.5" y1="595.5" x2="1048.5" y2="599" stroke="#000" stroke-width="1" shape-rendering="crispEdges"/>
<line x1="1082.5" y1="595.5" x2="1082.5" y2="599" stroke="#000" stroke-width="1" shape-rendering="crispEdges"/>
<line x1="952.5" y1="101" x2="952.5" y2="122" stroke="#000" stroke-width="1" shape-rendering="crispEdges"/>
<line x1="63" y1="111.5" x2="438" y2="111.5" stroke="#000" stroke-width="1" shape-rendering="crispEdges"/>
<line x1="576" y1="111.5" x2="952" y2="111.5" stroke="#000" stroke-width="1" shape-rendering="crispEdges"/>
<path d="M63.5 111.5 L67.5 109 L66.2 111.5 L67.5 114 Z" fill="#000" stroke="#000" stroke-width="0.8"/>
<path d="M951.5 111.5 L947.5 109 L948.8 111.5 L947.5 114 Z" fill="#000" stroke="#000" stroke-width="0.8"/>
<rect x="1087.5" y="122.5" width="105.0" height="297.5" fill="#fff" stroke="#000" stroke-width="1" shape-rendering="crispEdges"/>
<line x1="1087.5" y1="137.5" x2="1192.5" y2="137.5" stroke="#000" stroke-width="1" shape-rendering="crispEdges"/>
<line x1="1093" y1="143.5" x2="1187" y2="143.5" stroke="#008000" stroke-width="1" stroke-dasharray="18 6" shape-rendering="crispEdges"/>
<polygon points="1137.8,141.8 1143.2,141.8 1140.5,146.6" fill="#008000" stroke="#008000" stroke-width="0.6"/>
<line x1="1093" y1="165.5" x2="1187" y2="165.5" stroke="#0000ff" stroke-width="1" shape-rendering="crispEdges"/>
<polygon points="1137.8,163.8 1143.2,163.8 1140.5,168.6" fill="#0000ff" stroke="#0000ff" stroke-width="0.6"/>
<line x1="1093" y1="186.5" x2="1187" y2="186.5" stroke="#008000" stroke-width="1" stroke-dasharray="18 6" shape-rendering="crispEdges"/>
<polygon points="1137.8,188.2 1143.2,188.2 1140.5,183.4" fill="#008000" stroke="#008000" stroke-width="0.6"/>
<line x1="1093" y1="207.5" x2="1187" y2="207.5" stroke="#0000ff" stroke-width="1" shape-rendering="crispEdges"/>
<polygon points="1137.8,209.2 1143.2,209.2 1140.5,204.4" fill="#0000ff" stroke="#0000ff" stroke-width="0.6"/>
<line x1="1093" y1="229.5" x2="1187" y2="229.5" stroke="#ff0000" stroke-width="1" stroke-dasharray="3 3" shape-rendering="crispEdges"/>
<polygon points="1137.8,227.8 1143.2,227.8 1140.5,232.6" fill="#ff0000" stroke="#ff0000" stroke-width="0.6"/>
<line x1="1093" y1="250.5" x2="1187" y2="250.5" stroke="#008000" stroke-width="1" stroke-dasharray="18 6" shape-rendering="crispEdges"/>
<line x1="1093" y1="271.5" x2="1187" y2="271.5" stroke="#0000ff" stroke-width="1" shape-rendering="crispEdges"/>
<line x1="1093" y1="293.5" x2="1187" y2="293.5" stroke="#ff0000" stroke-width="1" stroke-dasharray="3 3" shape-rendering="crispEdges"/>
<polygon points="1137.8,295.2 1143.2,295.2 1140.5,290.4" fill="#ff0000" stroke="#ff0000" stroke-width="0.6"/>
<line x1="1093" y1="314.5" x2="1187" y2="314.5" stroke="#ff0000" stroke-width="1" stroke-dasharray="3 3" shape-rendering="crispEdges"/>
<path d="M1137.5 314.5H1143.5M1140.5 311.5V317.5" stroke="#ff0000" stroke-width="1.2" shape-rendering="crispEdges"/>
<line x1="1093" y1="335.5" x2="1187" y2="335.5" stroke="#000" stroke-width="1" shape-rendering="crispEdges"/>
<rect x="1137.5" y="332.5" width="6.0" height="6.0" fill="#000"/>
<line x1="1093" y1="357.5" x2="1187" y2="357.5" stroke="#ff00ff" stroke-width="1" shape-rendering="crispEdges"/>
<rect x="1138.0" y="355.0" width="5.0" height="5.0" fill="none" stroke="#ff00ff" stroke-width="1"/>
<line x1="1093" y1="378.5" x2="1187" y2="378.5" stroke="#800080" stroke-width="1" shape-rendering="crispEdges"/>
<rect x="1137.5" y="375.5" width="6.0" height="6.0" fill="#800080"/>
<line x1="1093" y1="399.5" x2="1187" y2="399.5" stroke="#000" stroke-width="1" shape-rendering="crispEdges"/>
<polygon points="1140.5,396.1 1143.9,399.5 1140.5,402.9 1137.1,399.5" fill="none" stroke="#000" stroke-width="1.1"/>
<g fill="#000">
<text x="57" y="128" font-size="11" text-anchor="end" >225</text>
<text x="57" y="206" font-size="11" text-anchor="end" >220</text>
<text x="57" y="285" font-size="11" text-anchor="end" >215</text>
<text x="57" y="364" font-size="11" text-anchor="end" >210</text>
<text x="57" y="443" font-size="11" text-anchor="end" >205</text>
<text x="57" y="522" font-size="11" text-anchor="end" >200</text>
<text x="57" y="601" font-size="11" text-anchor="end" >195</text>
<text x="62.5" y="611" font-size="11" text-anchor="middle" >0</text>
<text x="232.5" y="611" font-size="11" text-anchor="middle" >1000</text>
<text x="402.5" y="611" font-size="11" text-anchor="middle" >2000</text>
<text x="572.5" y="611" font-size="11" text-anchor="middle" >3000</text>
<text x="742.5" y="611" font-size="11" text-anchor="middle" >4000</text>
<text x="912.5" y="611" font-size="11" text-anchor="middle" >5000</text>
<text x="1082.5" y="611" font-size="11" text-anchor="middle" >6000</text>
<text x="571.6" y="632" font-size="10.8" text-anchor="middle" >Main Channel Distance (ft)</text>
<text x="0" y="0" font-size="11" text-anchor="middle" transform="translate(19 359.5) rotate(-90)">Elevation (ft)</text>
<text x="433.5" y="98" font-size="13.2" text-anchor="middle" >Single Bridge - Example 2</text>
<text x="648.5" y="98" font-size="13.35" text-anchor="middle" >Plan: Press/Weir Method : New Le, Lc</text>
<text x="808.3" y="98" font-size="12.85" text-anchor="middle" >10-02-2022</text>
<text x="506.4" y="117" font-size="11.07" text-anchor="middle" >Beaver Creek Kentwood</text>
<text x="1140" y="133" font-size="11.5" text-anchor="middle" font-weight="bold">Legend</text>
<text x="1140.5" y="157.7" font-size="10.8" text-anchor="middle" >EG&#160;&#160;May&#160;'74&#160;flood</text>
<text x="1140.5" y="178.7" font-size="10.8" text-anchor="middle" >WS&#160;&#160;May&#160;'74&#160;flood</text>
<text x="1140.5" y="199.7" font-size="10.8" text-anchor="middle" >EG&#160;&#160;100&#160;yr</text>
<text x="1140.5" y="221.7" font-size="10.8" text-anchor="middle" >WS&#160;&#160;100&#160;yr</text>
<text x="1140.5" y="242.7" font-size="10.8" text-anchor="middle" >Crit&#160;&#160;May&#160;'74&#160;flood</text>
<text x="1140.5" y="263.7" font-size="10.8" text-anchor="middle" >EG&#160;&#160;25&#160;yr</text>
<text x="1140.5" y="285.7" font-size="10.8" text-anchor="middle" >WS&#160;&#160;25&#160;yr</text>
<text x="1140.5" y="306.7" font-size="10.8" text-anchor="middle" >Crit&#160;&#160;100&#160;yr</text>
<text x="1140.5" y="327.7" font-size="10.8" text-anchor="middle" >Crit&#160;&#160;25&#160;yr</text>
<text x="1140.5" y="349.7" font-size="10.8" text-anchor="middle" >Ground</text>
<text x="1140.5" y="370.7" font-size="10.8" text-anchor="middle" >Left&#160;Levee</text>
<text x="1140.5" y="391.7" font-size="10.8" text-anchor="middle" >Right&#160;Levee</text>
<text x="1140.5" y="413.7" font-size="10.8" text-anchor="middle" >OWS&#160;&#160;May&#160;'74&#160;flood</text>
</g>
</g>
</svg>
</body></html>
